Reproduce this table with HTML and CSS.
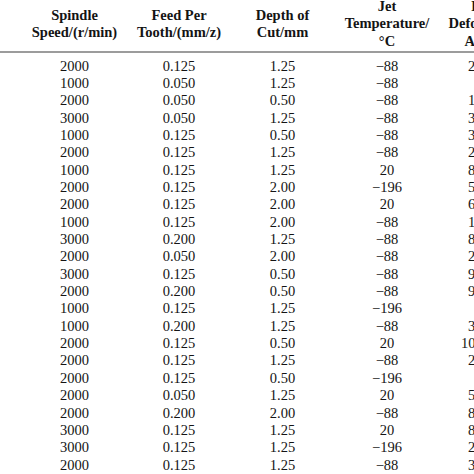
FILE: index.html
```html
<!DOCTYPE html>
<html>
<head>
<meta charset="utf-8">
<link rel="stylesheet" href="styles.css">
</head>
<body>
<div class="frame">
<table class="data">
<colgroup>
<col class="c1"><col class="c2"><col class="c3"><col class="c4"><col class="c5">
</colgroup>
<thead>
<tr>
<th class="first">Spindle<br>Speed/(r/min)</th>
<th>Feed Per<br>Tooth/(mm/z)</th>
<th>Depth of<br>Cut/mm</th>
<th>Jet<br>Temperature/<br>°C</th>
<th>Initial<br>Deformation/<br>Amount</th>
</tr>
</thead>
<tbody>
<tr class="top"><td class="first">2000</td><td>0.125</td><td>1.25</td><td>−88</td><td class="last">24.36</td></tr>
<tr><td class="first">1000</td><td>0.050</td><td>1.25</td><td>−88</td><td class="last short">9.87</td></tr>
<tr><td class="first">2000</td><td>0.050</td><td>0.50</td><td>−88</td><td class="last">17.52</td></tr>
<tr><td class="first">3000</td><td>0.050</td><td>1.25</td><td>−88</td><td class="last">31.08</td></tr>
<tr><td class="first">1000</td><td>0.125</td><td>0.50</td><td>−88</td><td class="last">33.45</td></tr>
<tr><td class="first">2000</td><td>0.125</td><td>1.25</td><td>−88</td><td class="last">26.71</td></tr>
<tr><td class="first">1000</td><td>0.125</td><td>1.25</td><td>20</td><td class="last">84.20</td></tr>
<tr><td class="first">2000</td><td>0.125</td><td>2.00</td><td>−196</td><td class="last">52.14</td></tr>
<tr><td class="first">2000</td><td>0.125</td><td>2.00</td><td>20</td><td class="last">61.37</td></tr>
<tr><td class="first">1000</td><td>0.125</td><td>2.00</td><td>−88</td><td class="last">14.62</td></tr>
<tr><td class="first">3000</td><td>0.200</td><td>1.25</td><td>−88</td><td class="last">80.55</td></tr>
<tr><td class="first">2000</td><td>0.050</td><td>2.00</td><td>−88</td><td class="last">27.09</td></tr>
<tr><td class="first">3000</td><td>0.125</td><td>0.50</td><td>−88</td><td class="last">93.18</td></tr>
<tr><td class="first">2000</td><td>0.200</td><td>0.50</td><td>−88</td><td class="last">96.40</td></tr>
<tr><td class="first">1000</td><td>0.125</td><td>1.25</td><td>−196</td><td class="last short">7.93</td></tr>
<tr><td class="first">1000</td><td>0.200</td><td>1.25</td><td>−88</td><td class="last">35.72</td></tr>
<tr><td class="first">2000</td><td>0.125</td><td>0.50</td><td>20</td><td class="last long">103.25</td></tr>
<tr><td class="first">2000</td><td>0.125</td><td>1.25</td><td>−88</td><td class="last">28.16</td></tr>
<tr><td class="first">2000</td><td>0.125</td><td>0.50</td><td>−196</td><td class="last short">6.48</td></tr>
<tr><td class="first">2000</td><td>0.050</td><td>1.25</td><td>20</td><td class="last">57.31</td></tr>
<tr><td class="first">2000</td><td>0.200</td><td>2.00</td><td>−88</td><td class="last">86.94</td></tr>
<tr><td class="first">3000</td><td>0.125</td><td>1.25</td><td>20</td><td class="last">88.02</td></tr>
<tr><td class="first">3000</td><td>0.125</td><td>1.25</td><td>−196</td><td class="last">23.67</td></tr>
<tr><td class="first">2000</td><td>0.125</td><td>1.25</td><td>−88</td><td class="last">34.85</td></tr>
</tbody>
</table>
</div>
</body>
</html>
```
FILE: styles.css
```css
html, body {
  margin: 0;
  padding: 0;
  background: #ffffff;
}

.frame {
  width: 474px;
  height: 474px;
  overflow: hidden;
}

.data {
  margin-top: -2px;
  border-collapse: collapse;
  border-spacing: 0;
  table-layout: fixed;
  width: 540px;
  font-family: "Liberation Serif", "Times New Roman", serif;
  font-size: 14.5px;
  line-height: 17.35px;
  color: #141414;
}

.c1 { width: 127px; }
.c2 { width: 104px; }
.c3 { width: 103px; }
.c4 { width: 106px; }
.c5 { width: 100px; }

.data th {
  font-weight: bold;
  text-align: center;
  vertical-align: middle;
  padding: 0 0 1px 0;
  border-bottom: 2px solid #9c9c9c;
  white-space: nowrap;
}

.data td {
  text-align: center;
  padding: 0;
  white-space: nowrap;
}

.data th.first,
.data td.first {
  padding-left: 22px;
}

.data tr.top td {
  padding-top: 4.6px;
}

.data td.last {
  text-align: left;
  padding-left: 28px;
}

.data td.last.short {
  padding-left: 38px;
}

.data td.last.long {
  padding-left: 21px;
}
```
